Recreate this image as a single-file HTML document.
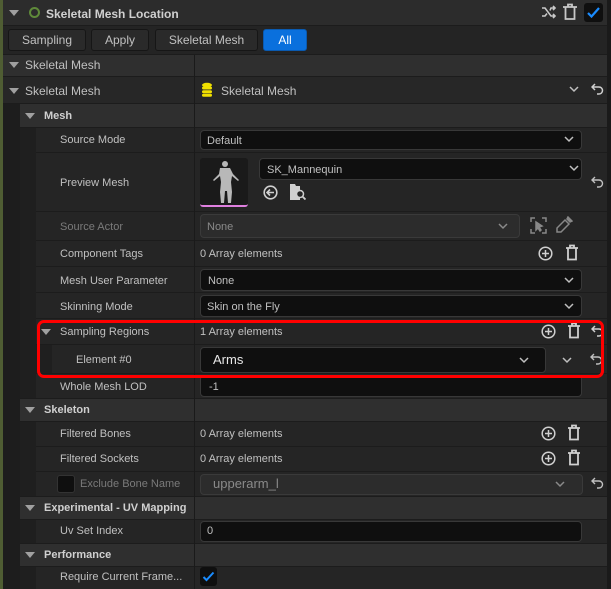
<!DOCTYPE html>
<html><head><style>
*{box-sizing:border-box;margin:0;padding:0}
body{width:611px;height:589px;background:#1c1c1c;font-family:"Liberation Sans",sans-serif;font-size:11px;color:#c0c0c0;position:relative;overflow:hidden}
.a{position:absolute}
.t{position:absolute;white-space:nowrap;line-height:14px;padding-top:1px}
.cat{background:#2f2f2f}
.prop{background:#252525}
.b{font-weight:bold;color:#d0d0d0}
.tri{position:absolute;width:0;height:0;border-left:5px solid transparent;border-right:5px solid transparent;border-top:6px solid #a0a0a0}
.dd{position:absolute;background:#0f0f0f;border:1px solid #383838;border-radius:4px}
.btn{position:absolute;top:29px;height:22px;background:#2a2a2a;border:1px solid #161616;border-radius:3px;text-align:center;line-height:20px;color:#c0c0c0;font-size:12px}
svg{position:absolute}
</style></head><body>
<div class="a" style="left:0;top:0;width:3px;height:589px;background:#4f5d33"></div>
<div class="a" style="left:3px;top:0;width:604px;height:25px;background:#2c2c2c"></div>
<div class="tri" style="left:9px;top:10px"></div>
<div class="a" style="left:29px;top:7px;width:11px;height:11px;border:2.5px solid #5f8a3a;border-radius:50%"></div>
<div class="t b" style="left:46px;top:6px;font-size:12px">Skeletal Mesh Location</div>
<svg style="left:541px;top:4px" width="16" height="16" viewBox="0 0 16 16" fill="none" stroke="#c8c8c8" stroke-width="1.6"><path d="M1 4h3l6 8h4M1 12h3l2-2.5M9 6.5L10 4h4M12 2l2 2-2 2M12 10l2 2-2 2"/></svg>
<svg style="left:562px;top:3px" width="16" height="18" viewBox="0 0 16 18" fill="none" stroke="#c8c8c8" stroke-width="1.8"><path d="M1 4h14M6 4V1.5h4V4M3.5 4v12h9V4"/></svg>
<div class="a" style="left:584px;top:3px;width:19px;height:19px;background:#0f0f0f;border-radius:3px"></div>
<svg style="left:586px;top:6px" width="15" height="13" viewBox="0 0 15 13" fill="none" stroke="#1a8cff" stroke-width="2.2"><path d="M2 7l3.5 3.5L13 2"/></svg>
<div class="a" style="left:607px;top:0;width:4px;height:589px;background:#1a1a1a"></div>
<div class="a" style="left:3px;top:26px;width:604px;height:28px;background:#242424"></div>
<div class="btn" style="left:8px;width:78px">Sampling</div>
<div class="btn" style="left:91px;width:58px">Apply</div>
<div class="btn" style="left:155px;width:103px">Skeletal Mesh</div>
<div class="btn" style="left:263px;width:44px;background:#0a70dd;border-color:#0a5ab0;color:#fff">All</div>

<div class="a cat" style="left:3px;top:55px;width:604px;height:21px"></div>
<div class="tri" style="left:9px;top:62px"></div>
<div class="t" style="left:25px;top:57px;font-size:12px">Skeletal Mesh</div>

<div class="a prop" style="left:3px;top:77px;width:604px;height:26px;background:#272727"></div>
<div class="tri" style="left:9px;top:88px"></div>
<div class="t" style="left:25px;top:83px;font-size:12px">Skeletal Mesh</div>
<svg style="left:201px;top:82px" width="12" height="15" viewBox="0 0 12 15"><ellipse cx="6" cy="3" rx="5" ry="2.2" fill="#f0e000"/><rect x="1" y="4.5" width="10" height="3" rx="1.5" fill="#f0e000"/><rect x="1" y="8.2" width="10" height="3" rx="1.5" fill="#f0e000"/><rect x="1" y="11.8" width="10" height="3" rx="1.5" fill="#f0e000"/></svg>
<div class="t" style="left:221px;top:83px;font-size:12px">Skeletal Mesh</div>
<svg style="left:569px;top:86px" width="10" height="7" viewBox="0 0 10 7" fill="none" stroke="#c0c0c0" stroke-width="1.5"><path d="M1 1l4 4 4-4"/></svg>
<svg style="left:591px;top:83px" width="13" height="12" viewBox="0 0 13 12" fill="none" stroke="#d0d0d0" stroke-width="1.5"><path d="M4 1L1 4l3 3M1 4h7a3.5 3.5 0 010 7H6"/></svg>

<div class="a" style="left:3px;top:104px;width:17px;height:485px;background:#1d1d1d"></div>

<div class="a cat" style="left:20px;top:104px;width:587px;height:23px"></div>
<div class="tri" style="left:25px;top:113px"></div>
<div class="t b" style="left:44px;top:108px">Mesh</div>
<div class="a" style="left:20px;top:128px;width:16px;height:270px;background:#1f1f1f"></div>

<div class="a prop" style="left:36px;top:128px;width:571px;height:24px"></div>
<div class="t" style="left:60px;top:132px">Source Mode</div>
<div class="dd" style="left:200px;top:130px;width:382px;height:20px"></div>
<div class="t" style="left:207px;top:133px">Default</div>

<div class="a prop" style="left:36px;top:153px;width:571px;height:58px"></div>
<div class="t" style="left:60px;top:175px">Preview Mesh</div>
<div class="a" style="left:200px;top:158px;width:48px;height:49px;background:#1a1a1a;border-radius:3px;border-bottom:2px solid #e080e0"></div>
<svg style="left:210px;top:160px" width="30" height="44" viewBox="0 0 30 44" fill="#b8b8b8"><circle cx="15" cy="4" r="3"/><path d="M10 8h10l3 6 6 6-1 1-6-5-1 6 1 10-1 11h-3l-1-12h-2l-1 12h-3l-1-11 1-10-1-6-6 5-1-1 6-6z"/></svg>
<div class="dd" style="left:259px;top:158px;width:323px;height:22px"></div>
<div class="t" style="left:267px;top:162px">SK_Mannequin</div>
<svg style="left:569px;top:165px" width="10" height="7" viewBox="0 0 10 7" fill="none" stroke="#c0c0c0" stroke-width="1.5"><path d="M1 1l4 4 4-4"/></svg>
<svg style="left:263px;top:185px" width="15" height="15" viewBox="0 0 15 15" fill="none" stroke="#d0d0d0" stroke-width="1.6"><circle cx="7.5" cy="7.5" r="6.3"/><path d="M11 7.5H4.5M7 4.5l-3 3 3 3"/></svg>
<svg style="left:289px;top:183px" width="17" height="17" viewBox="0 0 17 17"><path d="M1 1h5l1 2h4v14H1z" fill="#d0d0d0"/><circle cx="11" cy="11" r="3.5" fill="#252525" stroke="#d0d0d0" stroke-width="1.5"/><path d="M13.5 13.5l3 3" stroke="#d0d0d0" stroke-width="1.8"/></svg>
<svg style="left:591px;top:176px" width="13" height="12" viewBox="0 0 13 12" fill="none" stroke="#c0c0c0" stroke-width="1.4"><path d="M4 1L1 4l3 3M1 4h7a3.5 3.5 0 010 7H6"/></svg>

<div class="a prop" style="left:36px;top:212px;width:571px;height:28px"></div>
<div class="t" style="left:60px;top:219px;color:#7a7a7a">Source Actor</div>
<div class="a" style="left:200px;top:214px;width:320px;height:24px;background:#2c2c2c;border:1px solid #3a3a3a;border-radius:4px"></div>
<div class="t" style="left:207px;top:219px;color:#8a8a8a">None</div>
<svg style="left:498px;top:223px" width="10" height="7" viewBox="0 0 10 7" fill="none" stroke="#8a8a8a" stroke-width="1.5"><path d="M1 1l4 4 4-4"/></svg>
<svg style="left:530px;top:217px" width="17" height="17" viewBox="0 0 17 17" fill="none" stroke="#888" stroke-width="1.5"><path d="M1 5V1h4M12 1h4v4M16 12v4h-4M5 16H1v-4"/><path d="M6 5l6 4-3 1 2 3-1 1-2-3-2 2z" fill="#888"/></svg>
<svg style="left:556px;top:216px" width="17" height="18" viewBox="0 0 17 18" fill="none" stroke="#888" stroke-width="1.5"><path d="M11 2l4 4M9 4l4 4-8 8H1v-4z"/><path d="M12 1l4 4-2 1-3-3z" fill="#888"/></svg>

<div class="a prop" style="left:36px;top:241px;width:571px;height:25px"></div>
<div class="t" style="left:60px;top:246px">Component Tags</div>
<div class="t" style="left:200px;top:246px">0 Array elements</div>

<div class="a prop" style="left:36px;top:267px;width:571px;height:25px"></div>
<div class="t" style="left:60px;top:273px">Mesh User Parameter</div>
<div class="dd" style="left:200px;top:269px;width:382px;height:22px"></div>
<div class="t" style="left:208px;top:273px">None</div>

<div class="a prop" style="left:36px;top:293px;width:571px;height:25px"></div>
<div class="t" style="left:60px;top:299px">Skinning Mode</div>
<div class="dd" style="left:200px;top:295px;width:382px;height:22px"></div>
<div class="t" style="left:207px;top:299px">Skin on the Fly</div>

<div class="a prop" style="left:36px;top:319px;width:571px;height:25px"></div>
<div class="tri" style="left:41px;top:329px"></div>
<div class="t" style="left:60px;top:324px">Sampling Regions</div>
<div class="t" style="left:200px;top:324px">1 Array elements</div>

<div class="a" style="left:36px;top:345px;width:16px;height:28px;background:#1f1f1f"></div>
<div class="a prop" style="left:52px;top:345px;width:555px;height:28px"></div>
<div class="t" style="left:76px;top:352px">Element #0</div>
<div class="dd" style="left:200px;top:347px;width:346px;height:26px"></div>
<div class="t" style="left:213px;top:352px;font-size:13px;color:#e8e8e8">Arms</div>
<svg style="left:519px;top:357px" width="10" height="7" viewBox="0 0 10 7" fill="none" stroke="#c0c0c0" stroke-width="1.5"><path d="M1 1l4 4 4-4"/></svg>
<svg style="left:562px;top:357px" width="10" height="7" viewBox="0 0 10 7" fill="none" stroke="#c0c0c0" stroke-width="1.5"><path d="M1 1l4 4 4-4"/></svg>
<svg style="left:590px;top:353px" width="13" height="12" viewBox="0 0 13 12" fill="none" stroke="#c0c0c0" stroke-width="1.4"><path d="M4 1L1 4l3 3M1 4h7a3.5 3.5 0 010 7H6"/></svg>

<div class="a prop" style="left:36px;top:374px;width:571px;height:24px"></div>
<div class="t" style="left:60px;top:379px">Whole Mesh LOD</div>
<div class="dd" style="left:200px;top:375px;width:382px;height:22px"></div>
<div class="t" style="left:209px;top:379px">-1</div>

<div class="a cat" style="left:20px;top:399px;width:587px;height:22px"></div>
<div class="tri" style="left:25px;top:407px"></div>
<div class="t b" style="left:44px;top:402px">Skeleton</div>
<div class="a" style="left:20px;top:422px;width:16px;height:74px;background:#1f1f1f"></div>

<div class="a prop" style="left:36px;top:422px;width:571px;height:24px"></div>
<div class="t" style="left:60px;top:426px">Filtered Bones</div>
<div class="t" style="left:200px;top:426px">0 Array elements</div>
<div class="a prop" style="left:36px;top:447px;width:571px;height:24px"></div>
<div class="t" style="left:60px;top:451px">Filtered Sockets</div>
<div class="t" style="left:200px;top:451px">0 Array elements</div>
<div class="a prop" style="left:36px;top:472px;width:571px;height:24px"></div>
<div class="a" style="left:57px;top:475px;width:18px;height:18px;background:#0f0f0f;border:1px solid #333;border-radius:3px"></div>
<div class="t" style="left:80px;top:476px;color:#7a7a7a">Exclude Bone Name</div>
<div class="a" style="left:200px;top:474px;width:383px;height:21px;background:#2c2c2c;border:1px solid #3a3a3a;border-radius:4px"></div>
<div class="t" style="left:213px;top:476px;font-size:13px;color:#8a8a8a">upperarm_l</div>
<svg style="left:555px;top:481px" width="10" height="7" viewBox="0 0 10 7" fill="none" stroke="#8a8a8a" stroke-width="1.5"><path d="M1 1l4 4 4-4"/></svg>
<svg style="left:591px;top:477px" width="13" height="12" viewBox="0 0 13 12" fill="none" stroke="#c0c0c0" stroke-width="1.4"><path d="M4 1L1 4l3 3M1 4h7a3.5 3.5 0 010 7H6"/></svg>

<div class="a cat" style="left:20px;top:497px;width:587px;height:22px"></div>
<div class="tri" style="left:25px;top:505px"></div>
<div class="t b" style="left:44px;top:500px">Experimental - UV Mapping</div>
<div class="a" style="left:20px;top:520px;width:16px;height:23px;background:#1f1f1f"></div>
<div class="a prop" style="left:36px;top:520px;width:571px;height:23px"></div>
<div class="t" style="left:60px;top:523px">Uv Set Index</div>
<div class="dd" style="left:200px;top:521px;width:382px;height:21px"></div>
<div class="t" style="left:207px;top:523px">0</div>

<div class="a cat" style="left:20px;top:544px;width:587px;height:22px"></div>
<div class="tri" style="left:25px;top:552px"></div>
<div class="t b" style="left:44px;top:547px">Performance</div>
<div class="a" style="left:20px;top:567px;width:16px;height:22px;background:#1f1f1f"></div>
<div class="a prop" style="left:36px;top:567px;width:571px;height:22px"></div>
<div class="t" style="left:60px;top:569px">Require Current Frame...</div>
<div class="a" style="left:200px;top:567px;width:17px;height:19px;background:#0f0f0f;border-radius:3px"></div>
<svg style="left:202px;top:571px" width="13" height="11" viewBox="0 0 13 11" fill="none" stroke="#1a8cff" stroke-width="2"><path d="M1.5 6l3 3L11.5 1.5"/></svg>

<div class="a" style="left:194px;top:55px;width:1px;height:534px;background:#1a1a1a"></div>

<svg style="left:538px;top:246px" width="15" height="15" viewBox="0 0 15 15" fill="none" stroke="#d0d0d0" stroke-width="1.5"><circle cx="7.5" cy="7.5" r="6.3"/><path d="M7.5 4v7M4 7.5h7"/></svg>
<svg style="left:565px;top:244px" width="14" height="17" viewBox="0 0 14 17" fill="none" stroke="#d0d0d0" stroke-width="1.8"><path d="M1 4h12M5 4V1.5h4V4M3 4v11.5h8V4"/></svg>
<svg style="left:541px;top:324px" width="15" height="15" viewBox="0 0 15 15" fill="none" stroke="#d0d0d0" stroke-width="1.5"><circle cx="7.5" cy="7.5" r="6.3"/><path d="M7.5 4v7M4 7.5h7"/></svg>
<svg style="left:567px;top:322px" width="14" height="17" viewBox="0 0 14 17" fill="none" stroke="#d0d0d0" stroke-width="1.8"><path d="M1 4h12M5 4V1.5h4V4M3 4v11.5h8V4"/></svg>
<svg style="left:591px;top:325px" width="13" height="12" viewBox="0 0 13 12" fill="none" stroke="#d0d0d0" stroke-width="1.5"><path d="M4 1L1 4l3 3M1 4h7a3.5 3.5 0 010 7H6"/></svg>
<svg style="left:541px;top:426px" width="15" height="15" viewBox="0 0 15 15" fill="none" stroke="#d0d0d0" stroke-width="1.5"><circle cx="7.5" cy="7.5" r="6.3"/><path d="M7.5 4v7M4 7.5h7"/></svg>
<svg style="left:567px;top:424px" width="14" height="17" viewBox="0 0 14 17" fill="none" stroke="#d0d0d0" stroke-width="1.8"><path d="M1 4h12M5 4V1.5h4V4M3 4v11.5h8V4"/></svg>
<svg style="left:541px;top:451px" width="15" height="15" viewBox="0 0 15 15" fill="none" stroke="#d0d0d0" stroke-width="1.5"><circle cx="7.5" cy="7.5" r="6.3"/><path d="M7.5 4v7M4 7.5h7"/></svg>
<svg style="left:567px;top:449px" width="14" height="17" viewBox="0 0 14 17" fill="none" stroke="#d0d0d0" stroke-width="1.8"><path d="M1 4h12M5 4V1.5h4V4M3 4v11.5h8V4"/></svg>
<svg style="left:564px;top:136px" width="10" height="7" viewBox="0 0 10 7" fill="none" stroke="#c0c0c0" stroke-width="1.5"><path d="M1 1l4 4 4-4"/></svg>
<svg style="left:564px;top:277px" width="10" height="7" viewBox="0 0 10 7" fill="none" stroke="#c0c0c0" stroke-width="1.5"><path d="M1 1l4 4 4-4"/></svg>
<svg style="left:564px;top:303px" width="10" height="7" viewBox="0 0 10 7" fill="none" stroke="#c0c0c0" stroke-width="1.5"><path d="M1 1l4 4 4-4"/></svg>

<div class="a" style="left:37px;top:320px;width:567px;height:58px;border:3px solid #ff0000;border-radius:7px"></div>
</body></html>
